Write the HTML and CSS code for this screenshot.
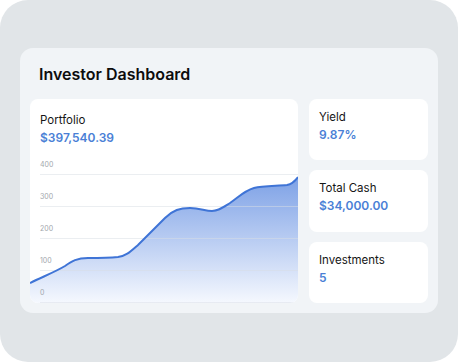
FILE: index.html
```html
<!DOCTYPE html>
<html lang="en">
<head>
  <meta charset="UTF-8">
  <meta name="viewport" content="width=device-width, initial-scale=1.0">
  <title>Investor Dashboard</title>
  <link rel="stylesheet" href="styles.css">
</head>
<body>
  <div class="frame">
    <div class="panel">
      <h1 class="title">Investor Dashboard</h1>
      <div class="grid">
        <div class="card chart-card">
          <div class="label">Portfolio</div>
          <div class="value">$397,540.39</div>
          <svg class="chart" width="268" height="153" viewBox="0 0 268 153">
            <defs>
              <linearGradient id="fill" x1="0" y1="0" x2="0" y2="1">
                <stop offset="0" stop-color="#7da1e6"/>
                <stop offset="1" stop-color="#f5f8fe"/>
              </linearGradient>
            </defs>
            <path fill="url(#fill)" d="M0,133 C12,127 25,122 35,116 C42,111 47,108 58,108 C70,108 78,108 88,107 C96,106 100,102 108,95 C118,85 125,78 135,68 C143,60 150,58 160,58 C170,58 175,61 182,61 C188,61 192,58 200,53 C210,46 214,41 224,38 C232,36 245,36 257,35 C262,34 265,31 268,27 L268,153 L0,153 Z"/>
            <g class="grid-lines">
              <line x1="10" y1="24.5" x2="268" y2="24.5"/>
              <line x1="10" y1="56.5" x2="268" y2="56.5"/>
              <line x1="10" y1="88.5" x2="268" y2="88.5"/>
              <line x1="10" y1="120.5" x2="268" y2="120.5"/>
              <line x1="10" y1="152.5" x2="268" y2="152.5"/>
            </g>
            <g class="axis">
              <text x="10" y="17">400</text>
              <text x="10" y="49">300</text>
              <text x="10" y="81">200</text>
              <text x="10" y="113">100</text>
              <text x="10" y="145">0</text>
            </g>
            <path class="line" d="M0,133 C12,127 25,122 35,116 C42,111 47,108 58,108 C70,108 78,108 88,107 C96,106 100,102 108,95 C118,85 125,78 135,68 C143,60 150,58 160,58 C170,58 175,61 182,61 C188,61 192,58 200,53 C210,46 214,41 224,38 C232,36 245,36 257,35 C262,34 265,31 268,27"/>
          </svg>
        </div>
        <div class="side">
          <div class="card small">
            <div class="label">Yield</div>
            <div class="value">9.87%</div>
          </div>
          <div class="card small">
            <div class="label">Total Cash</div>
            <div class="value">$34,000.00</div>
          </div>
          <div class="card small">
            <div class="label">Investments</div>
            <div class="value">5</div>
          </div>
        </div>
      </div>
    </div>
  </div>
</body>
</html>
```

FILE: styles.css
```css
body {
  margin: 0;
  background: #fff;
  font-family: 'Inter', 'Roboto', sans-serif;
  color: #111;
}
.frame {
  width: 458px;
  height: 362px;
  box-sizing: border-box;
  padding: 48px 20px 49px;
  background: #e1e5e8;
  border-radius: 28px;
}
.panel {
  height: 265px;
  box-sizing: border-box;
  padding: 16px 10px 10px;
  background: #f1f4f7;
  border-radius: 13px;
}
.title {
  margin: 0 0 14px 9px;
  font-size: 16px;
  line-height: 21px;
  font-weight: 600;
  color: #0d0d0d;
}
.grid {
  display: flex;
  gap: 11px;
  height: 204px;
}
.card {
  background: #fff;
  border-radius: 8px;
  box-sizing: border-box;
}
.chart-card {
  width: 268px;
  padding-top: 13px;
  display: flex;
  flex-direction: column;
  overflow: hidden;
}
.chart-card .label,
.chart-card .value {
  padding-left: 10px;
}
.side {
  flex: 1;
  display: flex;
  flex-direction: column;
  gap: 10px;
}
.small {
  flex: 1;
  padding: 10px 10px 0;
}
.label {
  font-size: 11.5px;
  line-height: 17px;
  color: #161616;
}
.value {
  font-size: 12px;
  line-height: 17px;
  font-weight: 600;
  color: #4a7fd6;
}
.chart {
  display: block;
  margin-top: auto;
}
.axis text {
  font-size: 7px;
  fill: #a3a7ac;
  font-family: 'Inter', sans-serif;
}
.grid-lines line {
  stroke: #d9dee5;
  stroke-width: 1;
  opacity: 0.5;
}
.line {
  fill: none;
  stroke: #3f74d6;
  stroke-width: 2;
}
```
